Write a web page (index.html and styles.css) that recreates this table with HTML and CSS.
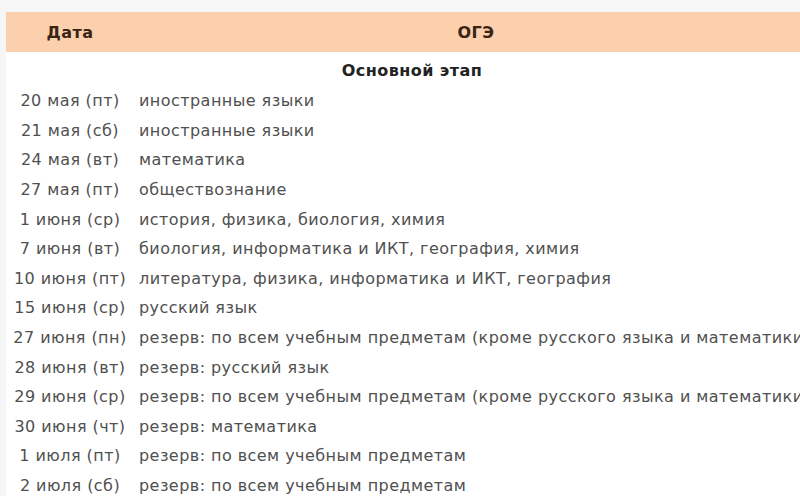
FILE: index.html
```html
<!DOCTYPE html>
<html lang="ru">
<head>
<meta charset="utf-8">
<title>ОГЭ</title>
<link rel="stylesheet" href="styles.css">
</head>
<body>
<div class="page">
  <table class="schedule">
    <colgroup>
      <col class="col-date">
      <col class="col-subj">
    </colgroup>
    <thead>
      <tr class="head">
        <th>Дата</th>
        <th>ОГЭ</th>
      </tr>
    </thead>
    <tbody>
      <tr class="section"><td colspan="2">Основной этап</td></tr>
      <tr><td class="date">20 мая (пт)</td><td class="subj">иностранные языки</td></tr>
      <tr><td class="date">21 мая (сб)</td><td class="subj">иностранные языки</td></tr>
      <tr><td class="date">24 мая (вт)</td><td class="subj">математика</td></tr>
      <tr><td class="date">27 мая (пт)</td><td class="subj">обществознание</td></tr>
      <tr><td class="date">1 июня (ср)</td><td class="subj">история, физика, биология, химия</td></tr>
      <tr><td class="date">7 июня (вт)</td><td class="subj">биология, информатика и ИКТ, география, химия</td></tr>
      <tr><td class="date">10 июня (пт)</td><td class="subj">литература, физика, информатика и ИКТ, география</td></tr>
      <tr><td class="date">15 июня (ср)</td><td class="subj">русский язык</td></tr>
      <tr><td class="date">27 июня (пн)</td><td class="subj">резерв: по всем учебным предметам (кроме русского языка и математики)</td></tr>
      <tr><td class="date">28 июня (вт)</td><td class="subj">резерв: русский язык</td></tr>
      <tr><td class="date">29 июня (ср)</td><td class="subj">резерв: по всем учебным предметам (кроме русского языка и математики)</td></tr>
      <tr><td class="date">30 июня (чт)</td><td class="subj">резерв: математика</td></tr>
      <tr><td class="date">1 июля (пт)</td><td class="subj">резерв: по всем учебным предметам</td></tr>
      <tr><td class="date">2 июля (сб)</td><td class="subj">резерв: по всем учебным предметам</td></tr>
    </tbody>
  </table>
</div>
</body>
</html>
```

FILE: styles.css
```css
html, body {
  margin: 0;
  padding: 0;
  background: #f6f6f6;
  overflow: hidden;
}

.page {
  padding: 12px 0 0 6px;
  width: 812px;
}

.schedule {
  border-collapse: collapse;
  table-layout: fixed;
  width: 812px;
  background: #ffffff;
  font-family: "DejaVu Sans", Verdana, sans-serif;
  font-size: 16px;
  letter-spacing: 0.45px;
  color: #505050;
}

.col-date { width: 128px; }
.col-subj { width: 684px; }

.head th {
  height: 40px;
  padding: 0;
  background: #fccfad;
  color: #3a2414;
  font-weight: bold;
  text-align: center;
}

.section td {
  height: 32px;
  padding: 2px 0 0 0;
  text-align: center;
  font-weight: bold;
  color: #222222;
}

tbody td {
  height: 29.6px;
  padding: 0;
  white-space: nowrap;
}

.date {
  text-align: center;
}

.subj {
  text-align: left;
  padding-left: 5px;
}
```
